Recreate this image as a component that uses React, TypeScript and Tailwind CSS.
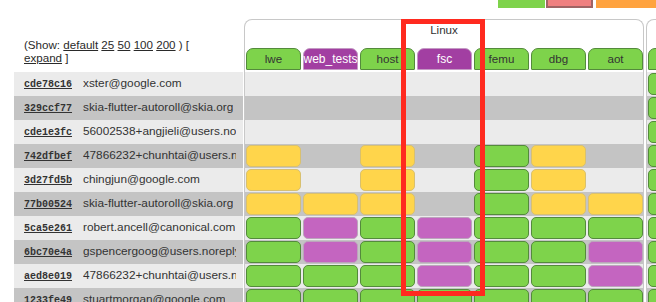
import React from "react";

const rows = [
  { hash: "cde78c16", author: "xster@google.com", linux: ".......", mac: "gggg" },
  { hash: "329ccf77", author: "skia-flutter-autoroll@skia.org", linux: ".......", mac: "gggg" },
  { hash: "cde1e3fc", author: "56002538+angjieli@users.noreply.github.com", linux: ".......", mac: "gggg" },
  { hash: "742dfbef", author: "47866232+chunhtai@users.noreply.github.com", linux: "y.y.gy.", mac: "gggg" },
  { hash: "3d27fd5b", author: "chingjun@google.com", linux: "y.y.gy.", mac: "gggg" },
  { hash: "77b00524", author: "skia-flutter-autoroll@skia.org", linux: "yyy.gyy", mac: "gggg" },
  { hash: "5ca5e261", author: "robert.ancell@canonical.com", linux: "gpgpggg", mac: "gggg" },
  { hash: "6bc70e4a", author: "gspencergoog@users.noreply.github.com", linux: "gpgpggp", mac: "gggg" },
  { hash: "aed8e019", author: "47866232+chunhtai@users.noreply.github.com", linux: "gggpggp", mac: "gggg" },
  { hash: "1233fe49", author: "stuartmorgan@google.com", linux: "ggggggg", mac: "gggg" },
];

const linuxTabs = [
  { name: "lwe", flaky: false },
  { name: "web_tests", flaky: true },
  { name: "host", flaky: false },
  { name: "fsc", flaky: true },
  { name: "femu", flaky: false },
  { name: "dbg", flaky: false },
  { name: "aot", flaky: false },
];

const macTabs = [
  { name: "ios", flaky: false },
  { name: "host", flaky: false },
  { name: "dbg", flaky: false },
  { name: "aot", flaky: false },
];

function Cell({ s }: { s: string }) {
  if (s === "g") return <div className="w-[55px] h-[22px] shrink-0 rounded-[5px] border border-[#548a3c] bg-[#7ed34b]" />;
  if (s === "y") return <div className="w-[55px] h-[22px] shrink-0 rounded-[5px] border border-[#d8c070] bg-[#ffd54b]" />;
  if (s === "p") return <div className="w-[55px] h-[22px] shrink-0 rounded-[5px] border border-[#bca4bc] bg-[#c465c0]" />;
  return <div className="w-[55px] h-[22px] shrink-0" />;
}

function Tab({ name, flaky }: { name: string; flaky: boolean }) {
  return (
    <div
      className={`w-[55px] h-[22px] shrink-0 flex items-center justify-center rounded-t-[7px] rounded-b-[1px] border whitespace-nowrap leading-[14px] ${
        flaky ? "bg-[#a23fa2] border-[#c49ac4] text-white text-[12px]" : "bg-[#7ed34b] border-[#548a3c] text-[#333]"
      }`}
    >
      {name}
    </div>
  );
}

function Panel({ title, tabs, cellKey }: { title: string; tabs: { name: string; flaky: boolean }[]; cellKey: "linux" | "mac" }) {
  return (
    <div className="shrink-0 w-[400px] border-l border-r border-t border-[#c8c8c8] rounded-t-[8px] flex flex-col">
      <div className="pt-[3px] h-[17px] leading-[14px] text-center text-[#333]">{title}</div>
      <div className="mt-[11px] flex gap-[2px] pl-[1px]">
        {tabs.map((t) => (
          <Tab key={t.name + title} name={t.name} flaky={t.flaky} />
        ))}
      </div>
      <div className="mt-[2px] flex flex-col">
        {rows.map((r, i) => (
          <div key={r.hash} className={`h-[24px] flex items-center gap-[2px] pl-[1px] ${i % 2 === 0 ? "bg-[#ebebeb]" : "bg-[#c4c4c4]"}`}>
            {r[cellKey].split("").map((s, j) => (
              <Cell key={j} s={s} />
            ))}
          </div>
        ))}
      </div>
    </div>
  );
}

export default function App() {
  return (
    <div className="relative w-[656px] h-[302px] overflow-hidden bg-white text-[11.6px] text-[#2a2a2a] font-['Liberation_Sans',Arial,sans-serif]">
      {/* legend strip, scrolled mostly out of view */}
      <div className="h-[8px] overflow-hidden flex items-end">
        <span className="ml-[446px] mb-[8px] leading-[14px] text-[#222]">Legend, ignoring</span>
        <div className="ml-auto flex items-end">
          <div className="w-[47px] h-[20px] bg-[#7ed34b]" />
          <div className="ml-[1px] w-[47px] h-[20px] bg-[#f08080] border-2 border-[#a06464]" />
          <div className="ml-[3px] w-[60px] h-[20px] bg-[#ffa33f]" />
        </div>
      </div>

      <div className="mt-[11px] flex">
        <div className="ml-[14px] w-[229px] mr-[1px] shrink-0 flex flex-col">
          <div className="h-[53px] flex flex-col justify-end pb-[8px] pl-[10px] leading-[13px]">
            <div>
              (Show: <span className="underline">default</span> <span className="underline">25</span>{" "}
              <span className="underline">50</span> <span className="underline">100</span>{" "}
              <span className="underline">200</span> ) [
              <br />
              <span className="underline">expand</span> ]
            </div>
          </div>
          {rows.map((r, i) => (
            <div
              key={r.hash}
              className={`h-[24px] flex items-center pl-[10px] pr-[7px] ${i % 2 === 0 ? "bg-[#ebebeb]" : "bg-[#c4c4c4]"}`}
            >
              <span className="w-[48px] shrink-0 font-['Liberation_Mono','Courier_New',monospace] font-bold text-[10px] underline text-[#333]">
                {r.hash}
              </span>
              <span className="ml-[11px] whitespace-nowrap overflow-hidden text-[#333] text-[11.8px]">{r.author}</span>
            </div>
          ))}
        </div>

        <Panel title="Linux" tabs={linuxTabs} cellKey="linux" />
        <div className="ml-[2px]">
          <Panel title="Mac" tabs={macTabs} cellKey="mac" />
        </div>
      </div>

      {/* highlight overlay */}
      <div className="absolute left-[401px] top-[19px] w-[84px] h-[277px] border-[5px] border-[#ff2a1f]" />
    </div>
  );
}
